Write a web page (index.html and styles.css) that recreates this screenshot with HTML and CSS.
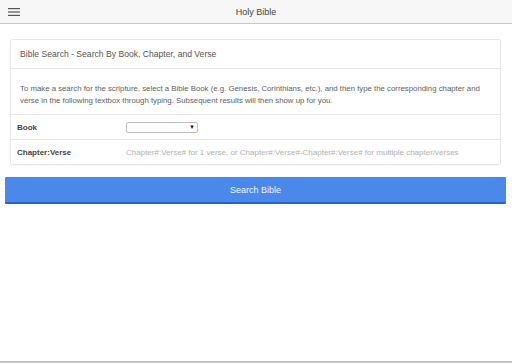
FILE: index.html
```html
<!DOCTYPE html>
<html lang="en">
<head>
    <meta charset="UTF-8">
    <meta name="viewport" content="width=device-width, initial-scale=1.0">
    <title>Holy Bible</title>
    <link rel="stylesheet" href="styles.css">
</head>
<body>
    <header class="topbar">
        <span class="menu-icon">
            <svg width="12" height="8" viewBox="0 0 12 8">
                <rect x="0" y="0" width="12" height="1.2" fill="#555"/>
                <rect x="0" y="3.4" width="12" height="1.2" fill="#555"/>
                <rect x="0" y="6.8" width="12" height="1.2" fill="#555"/>
            </svg>
        </span>
        <span class="topbar-title">Holy Bible</span>
    </header>
    <main class="content">
        <div class="panel">
            <div class="panel-heading">Bible Search - Search By Book, Chapter, and Verse</div>
            <div class="panel-body">
                To make a search for the scripture, select a Bible Book (e.g. Genesis, Corinthians, etc.), and then type the corresponding chapter and verse in the following textbox through typing. Subsequent results will then show up for you.
            </div>
            <div class="field-row">
                <label class="field-label" for="book">Book</label>
                <div class="select-wrap">
                    <select id="book" class="book-select">
                        <option></option>
                    </select>
                    <span class="select-arrow">&#9660;</span>
                </div>
            </div>
            <div class="field-row">
                <label class="field-label" for="verse">Chapter:Verse</label>
                <input type="text" id="verse" class="verse-input" placeholder="Chapter#:Verse# for 1 verse, or Chapter#:Verse#-Chapter#:Verse# for multiple chapter/verses">
            </div>
        </div>
        <button class="search-button">Search Bible</button>
    </main>
    <div class="bottom-bar"></div>
</body>
</html>
```

FILE: styles.css
```css
html, body {
    height: 100%;
}
body {
    font-family: "Liberation Sans", Arial, sans-serif;
    margin: 0;
    padding: 0;
    background-color: #fff;
    color: #555;
    display: flex;
    flex-direction: column;
}
.topbar {
    height: 23px;
    background-color: #f7f7f7;
    border-bottom: 1px solid #c9c9c9;
    display: flex;
    align-items: center;
    position: relative;
    flex-shrink: 0;
}
.menu-icon {
    display: flex;
    margin-left: 8px;
    margin-top: 0;
}
.topbar-title {
    flex: 1;
    text-align: center;
    font-size: 9px;
    color: #444;
    margin-right: 20px;
}
.content {
    flex: 1;
    padding: 15px 6px 0 5px;
}
.panel {
    margin: 0 5px 0 5px;
    border: 1px solid #e6e6e6;
    border-radius: 2px;
    box-shadow: 0 1px 1px rgba(0, 0, 0, 0.04);
}
.panel-heading {
    height: 28px;
    line-height: 28px;
    padding-left: 9px;
    font-size: 8.6px;
    color: #555;
    border-bottom: 1px solid #e6e6e6;
}
.panel-body {
    padding: 14px 9px 7px 9px;
    font-size: 7.8px;
    line-height: 12px;
    color: #5e5e5e;
    border-bottom: 1px solid #e6e6e6;
}
.field-row {
    display: flex;
    align-items: center;
    height: 24px;
    padding-left: 6px;
}
.field-row + .field-row {
    border-top: 1px solid #e6e6e6;
}
.field-label {
    width: 109px;
    font-size: 8px;
    font-weight: bold;
    color: #444;
}
.select-wrap {
    position: relative;
    display: flex;
    margin-top: 1px;
}
.book-select {
    appearance: none;
    -webkit-appearance: none;
    width: 72px;
    height: 11px;
    margin: 0;
    padding: 0;
    border: 1px solid #bdbdbd;
    border-radius: 2px;
    background: #fff;
    font-size: 7px;
}
.select-arrow {
    position: absolute;
    right: 3px;
    top: 2px;
    font-size: 6px;
    color: #111;
}
.verse-input {
    flex: 1;
    border: none;
    padding: 0;
    margin: 0;
    font-family: "Liberation Sans", Arial, sans-serif;
    font-size: 8px;
    color: #555;
    outline: none;
}
.verse-input::placeholder {
    color: #b0b0b0;
}
.search-button {
    display: block;
    width: 100%;
    height: 27px;
    margin-top: 12px;
    background-color: #4a89ea;
    border: none;
    border-bottom: 2px solid #1e63d8;
    border-radius: 1px;
    color: #f2f6ff;
    font-family: "Liberation Sans", Arial, sans-serif;
    font-size: 9px;
    cursor: pointer;
}
.bottom-bar {
    height: 2px;
    background-color: #c4c4c4;
    flex-shrink: 0;
}
```
